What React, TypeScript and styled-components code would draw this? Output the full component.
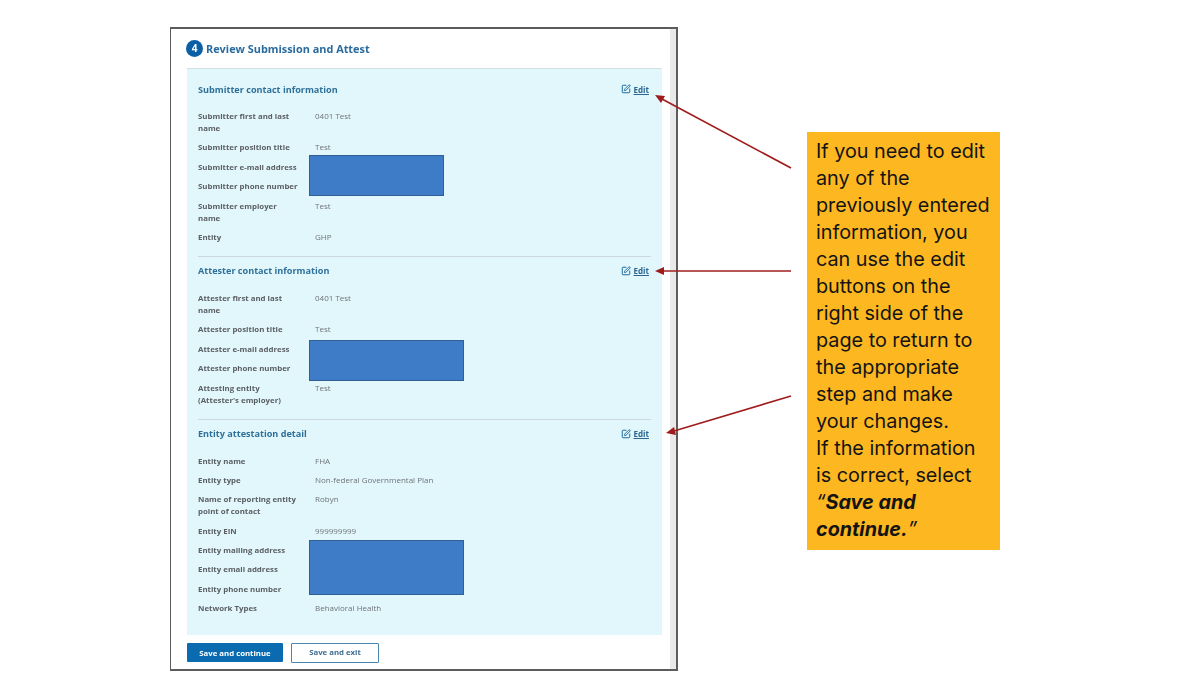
import React from "react";
import styled, { createGlobalStyle } from "styled-components";
import { SquarePen } from "lucide-react";

const GlobalStyle = createGlobalStyle`
    html, body {
        margin: 0;
        padding: 0;
        background: #ffffff;
    }
`;

type Field = {
    label: React.ReactNode;
    value?: string;
    redact?: { top: number; width: number; height: number };
};

type Section = {
    title: string;
    fields: Field[];
};

const sections: Section[] = [
    {
        title: "Submitter contact information",
        fields: [
            { label: <>Submitter first and last<br />name</>, value: "0401 Test" },
            { label: "Submitter position title", value: "Test" },
            { label: "Submitter e-mail address", redact: { top: -6, width: 135, height: 41 } },
            { label: "Submitter phone number" },
            { label: <>Submitter employer<br />name</>, value: "Test" },
            { label: "Entity", value: "GHP" },
        ],
    },
    {
        title: "Attester contact information",
        fields: [
            { label: <>Attester first and last<br />name</>, value: "0401 Test" },
            { label: "Attester position title", value: "Test" },
            { label: "Attester e-mail address", redact: { top: -3, width: 155, height: 41 } },
            { label: "Attester phone number" },
            { label: <>Attesting entity<br />(Attester's employer)</>, value: "Test" },
        ],
    },
    {
        title: "Entity attestation detail",
        fields: [
            { label: "Entity name", value: "FHA" },
            { label: "Entity type", value: "Non-federal Governmental Plan" },
            { label: <>Name of reporting entity<br />point of contact</>, value: "Robyn" },
            { label: "Entity EIN", value: "999999999" },
            { label: "Entity mailing address", redact: { top: -4, width: 155, height: 55 } },
            { label: "Entity email address" },
            { label: "Entity phone number" },
            { label: "Network Types", value: "Behavioral Health" },
        ],
    },
];

const calloutLines = [
    "If you need to edit",
    "any of the",
    "previously entered",
    "information, you",
    "can use the edit",
    "buttons on the",
    "right side of the",
    "page to return to",
    "the appropriate",
    "step and make",
    "your changes.",
    "If the information",
    "is correct, select",
];

export default function App() {
    return (
        <>
            <GlobalStyle />
            <Slide>
                <Frame>
                    <Content>
                        <StepHeader>
                            <StepBadge>4</StepBadge>
                            <StepTitle>Review Submission and Attest</StepTitle>
                        </StepHeader>
                        <Panel>
                            {sections.map((section) => (
                                <SectionBlock key={section.title}>
                                    <SectionHeader>
                                        <SectionTitle>{section.title}</SectionTitle>
                                        <EditLink>
                                            <SquarePen size={10} strokeWidth={2.4} />
                                            <span>Edit</span>
                                        </EditLink>
                                    </SectionHeader>
                                    <FieldList>
                                        {section.fields.map((field, i) => (
                                            <FieldRow key={i}>
                                                <FieldLabel>{field.label}</FieldLabel>
                                                <FieldValue>
                                                    {field.value}
                                                    {field.redact && (
                                                        <Redaction
                                                            $top={field.redact.top}
                                                            $width={field.redact.width}
                                                            $height={field.redact.height}
                                                        />
                                                    )}
                                                </FieldValue>
                                            </FieldRow>
                                        ))}
                                    </FieldList>
                                </SectionBlock>
                            ))}
                        </Panel>
                        <Actions>
                            <PrimaryButton>Save and continue</PrimaryButton>
                            <SecondaryButton>Save and exit</SecondaryButton>
                        </Actions>
                    </Content>
                    <ScrollTrack />
                </Frame>
                <Callout>
                    {calloutLines.map((line) => (
                        <div key={line}>{line}</div>
                    ))}
                    <div>
                        <Slanted>“</Slanted>
                        <Emphasis>Save and</Emphasis>
                    </div>
                    <div>
                        <Emphasis>continue.</Emphasis>
                        <Slanted>”</Slanted>
                    </div>
                </Callout>
                <Arrows viewBox="0 0 1200 675" aria-hidden="true">
                    <ArrowLine x1="791" y1="168" x2="662" y2="99" />
                    <polygon points="655,95 665,96 661,103" fill="#a01c1c" />
                    <ArrowLine x1="791" y1="271" x2="663" y2="271" />
                    <polygon points="655,271 664,267 664,275" fill="#a01c1c" />
                    <ArrowLine x1="791" y1="396" x2="674" y2="431" />
                    <polygon points="666,433 674,427 676,435" fill="#a01c1c" />
                </Arrows>
            </Slide>
        </>
    );
}

const Slide = styled.div`
    position: relative;
    box-sizing: border-box;
    width: 1200px;
    height: 675px;
    padding: 27px 0 0 170px;
    display: flex;
    align-items: flex-start;
    overflow: hidden;
    background: #ffffff;
`;

const Frame = styled.div`
    box-sizing: border-box;
    width: 508px;
    height: 644px;
    display: flex;
    border: 2px solid #5c5c5c;
    border-left-width: 1px;
    background: #ffffff;
    filter: blur(0.35px);
    font-family: "Open Sans", "Noto Sans", sans-serif;
`;

const Content = styled.div`
    flex: 1;
    min-width: 0;
    padding: 10px 8px 0 16px;
`;

const ScrollTrack = styled.div`
    width: 6px;
    background: #e9e9e9;
`;

const StepHeader = styled.div`
    display: flex;
    align-items: center;
    gap: 3px;
    height: 18px;
    margin-bottom: 11px;
`;

const StepBadge = styled.div`
    width: 17px;
    height: 17px;
    margin-left: -1px;
    border-radius: 50%;
    display: flex;
    align-items: center;
    justify-content: center;
    background: #0b5fa5;
    color: #ffffff;
    font-size: 10px;
    font-weight: 700;
`;

const StepTitle = styled.div`
    color: #2a6b9f;
    font-size: 10.9px;
    font-weight: 700;
`;

const Panel = styled.div`
    box-sizing: border-box;
    height: 567px;
    padding: 13px 11px 0;
    border-top: 1px solid #d3dfe3;
    background: #e2f7fc;
`;

const SectionBlock = styled.section`
    padding-bottom: 13px;
    margin-bottom: 7px;
    border-bottom: 1px solid #ccd8db;

    &:last-child {
        border-bottom: none;
    }
`;

const SectionHeader = styled.div`
    display: flex;
    align-items: center;
    justify-content: space-between;
    height: 14px;
    margin-bottom: 14px;
`;

const SectionTitle = styled.div`
    color: #2f7099;
    font-size: 9.1px;
    font-weight: 700;
`;

const EditLink = styled.a`
    display: flex;
    align-items: center;
    gap: 3px;
    margin-right: 2px;
    color: #1f6c9e;
    font-size: 8px;
    font-weight: 700;

    span {
        text-decoration: underline;
        color: #2a6690;
    }
`;

const FieldList = styled.div`
    display: flex;
    flex-direction: column;
    gap: 7.4px;
`;

const FieldRow = styled.div`
    display: flex;
    font-size: 8px;
    line-height: 12px;
`;

const FieldLabel = styled.div`
    width: 117px;
    flex: none;
    color: #5a5f63;
    font-size: 7.85px;
    font-weight: 700;
`;

const FieldValue = styled.div`
    position: relative;
    color: #6f7478;
`;

const Redaction = styled.div<{ $top: number; $width: number; $height: number }>`
    position: absolute;
    top: ${(p) => p.$top}px;
    left: -6px;
    width: ${(p) => p.$width}px;
    height: ${(p) => p.$height}px;
    box-sizing: border-box;
    border: 1px solid #2f5f97;
    background: #3f7cc8;
`;

const Actions = styled.div`
    display: flex;
    gap: 8px;
    margin-top: 8px;
`;

const PrimaryButton = styled.button`
    box-sizing: border-box;
    width: 96px;
    height: 19px;
    padding: 0;
    border: none;
    border-radius: 1px;
    background: #0a6bb0;
    color: #ffffff;
    font-family: inherit;
    font-size: 7.8px;
    font-weight: 700;
`;

const SecondaryButton = styled.button`
    box-sizing: border-box;
    width: 88px;
    height: 20px;
    padding: 0 0 2px;
    border: 1px solid #4a86ad;
    border-radius: 1px;
    background: #ffffff;
    color: #3d6f92;
    font-family: inherit;
    font-size: 7.8px;
    font-weight: 700;
`;

const Callout = styled.div`
    box-sizing: border-box;
    width: 193px;
    height: 418px;
    margin: 105px 0 0 129px;
    padding: 6px 0 0 9px;
    background: #fdb721;
    color: #141414;
    font-family: Inter, "Liberation Sans", sans-serif;
    font-size: 19.8px;
    line-height: 27px;
    white-space: nowrap;
`;

const Emphasis = styled.b`
    font-style: italic;
`;

const Slanted = styled.span`
    font-style: italic;
`;

const Arrows = styled.svg`
    position: absolute;
    top: 0;
    left: 0;
    width: 1200px;
    height: 675px;
    pointer-events: none;
`;

const ArrowLine = styled.line`
    stroke: #a01c1c;
    stroke-width: 1.6;
`;
